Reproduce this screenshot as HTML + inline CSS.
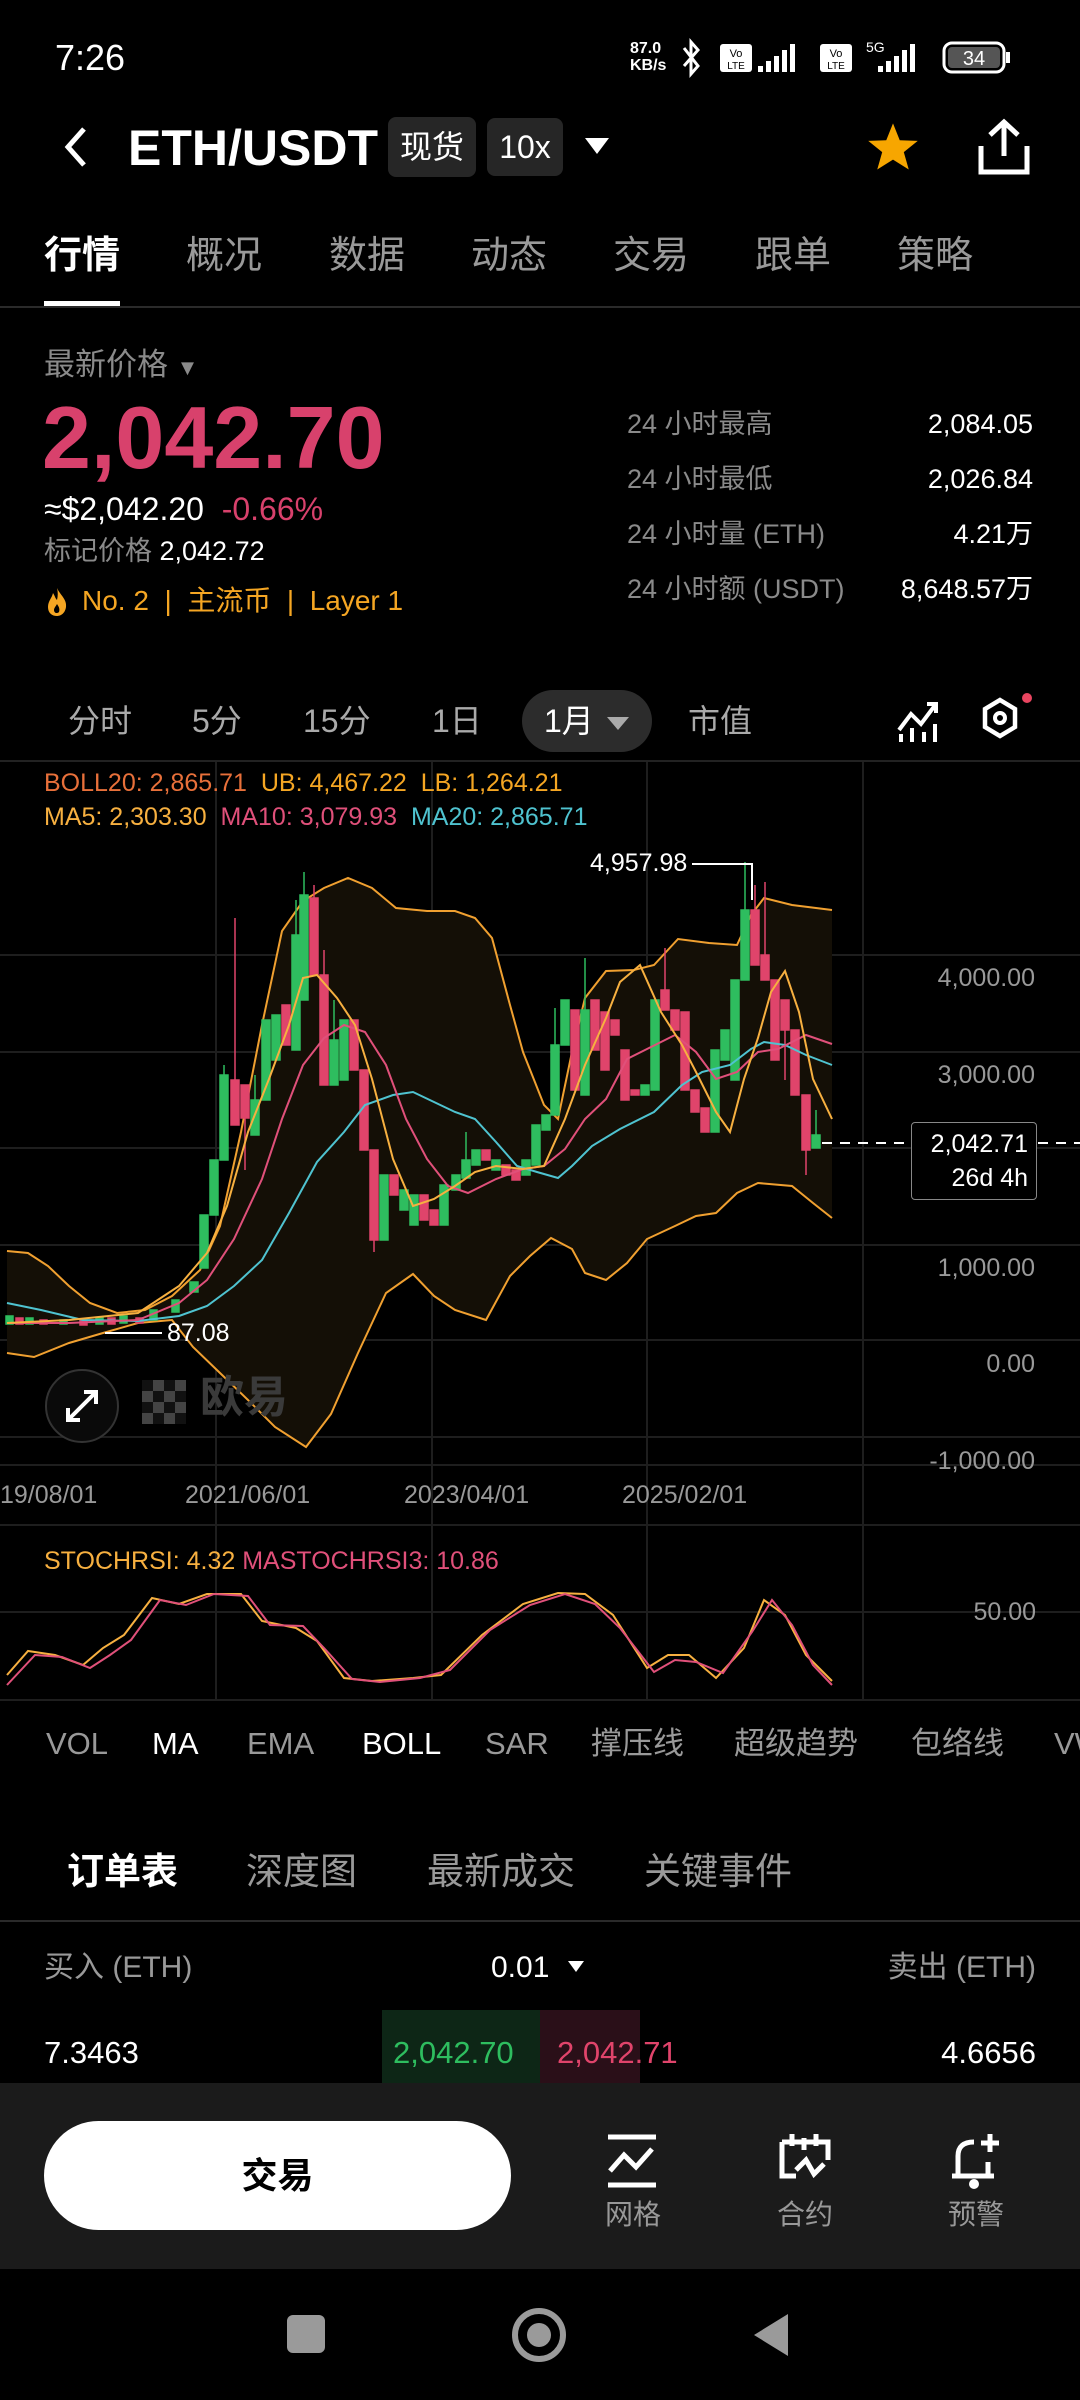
<!DOCTYPE html>
<html><head><meta charset="utf-8"><style>
*{margin:0;padding:0;box-sizing:border-box}
body{width:1080px;height:2400px;background:#000;color:#fff;font-family:"Liberation Sans","Noto Sans CJK SC",sans-serif;position:relative;overflow:hidden;line-height:1.2}
.a{position:absolute;white-space:nowrap}
.g{color:#8a8a8a}
</style></head><body>
<div class="a" style="left:55px;top:36px;font-size:36px">7:26</div>
<div class="a" style="left:630px;top:40px;font-size:16px;line-height:17px;font-weight:bold">87.0<br>KB/s</div>
<svg class="a" style="left:680px;top:36px" width="340" height="44" viewBox="0 0 340 44">
<path d="M4 12 L18 30 L11 38 L11 6 L18 14 L4 30" stroke="#fff" stroke-width="3" fill="none"/>
<rect x="40" y="8" width="32" height="28" rx="3" fill="#fff"/><text x="56" y="21" font-size="11" text-anchor="middle" fill="#000" font-family="Liberation Sans">Vo</text><text x="56" y="33" font-size="10" text-anchor="middle" fill="#000" font-family="Liberation Sans">LTE</text>
<g fill="#fff"><rect x="78" y="30" width="5" height="6"/><rect x="86" y="25" width="5" height="11"/><rect x="94" y="20" width="5" height="16"/><rect x="102" y="14" width="5" height="22"/><rect x="110" y="8" width="5" height="28"/></g>
<rect x="140" y="8" width="32" height="28" rx="3" fill="#fff"/><text x="156" y="21" font-size="11" text-anchor="middle" fill="#000" font-family="Liberation Sans">Vo</text><text x="156" y="33" font-size="10" text-anchor="middle" fill="#000" font-family="Liberation Sans">LTE</text>
<text x="186" y="16" font-size="14" fill="#fff" font-family="Liberation Sans">5G</text>
<g fill="#fff"><rect x="198" y="30" width="5" height="6"/><rect x="206" y="25" width="5" height="11"/><rect x="214" y="20" width="5" height="16"/><rect x="222" y="14" width="5" height="22"/><rect x="230" y="8" width="5" height="28"/></g>
<rect x="264" y="7" width="60" height="29" rx="8" fill="none" stroke="#fff" stroke-width="3"/><rect x="268" y="11" width="52" height="21" rx="4" fill="#555"/><rect x="326" y="16" width="4" height="11" fill="#fff"/>
<text x="294" y="29" font-size="20" text-anchor="middle" fill="#fff" font-family="Liberation Sans">34</text>
</svg>
<svg class="a" style="left:58px;top:125px" width="34" height="44"><path d="M26 4 L10 22 L26 40" stroke="#fff" stroke-width="5" fill="none"/></svg>
<div class="a" style="left:128px;top:118px;font-size:50px;font-weight:bold">ETH/USDT</div>
<div class="a" style="left:388px;top:117px;width:88px;height:60px;background:#262626;border-radius:8px;font-size:32px;text-align:center;line-height:60px">现货</div>
<div class="a" style="left:487px;top:118px;width:76px;height:58px;background:#262626;border-radius:8px;font-size:32px;text-align:center;line-height:58px">10x</div>
<svg class="a" style="left:585px;top:138px" width="24" height="18"><path d="M0 0 H24 L12 16Z" fill="#fff"/></svg>
<svg class="a" style="left:866px;top:120px" width="54" height="54" viewBox="0 0 24 24"><path d="M12 1.5 L15 9 L23 9.3 L16.8 14.3 L19 22 L12 17.6 L5 22 L7.2 14.3 L1 9.3 L9 9Z" fill="#f7a600"/></svg>
<svg class="a" style="left:976px;top:118px" width="56" height="58"><path d="M28 4 V38 M14 17 L28 4 L42 17 M5 28 V54 H51 V28" stroke="#fff" stroke-width="5" fill="none"/></svg>
<div class="a" style="left:44px;top:234px;font-size:38px;font-weight:bold">行情</div>
<div class="a" style="left:186px;top:234px;font-size:38px;color:#999">概况</div>
<div class="a" style="left:329px;top:234px;font-size:38px;color:#999">数据</div>
<div class="a" style="left:471px;top:234px;font-size:38px;color:#999">动态</div>
<div class="a" style="left:613px;top:234px;font-size:38px;color:#999">交易</div>
<div class="a" style="left:755px;top:234px;font-size:38px;color:#999">跟单</div>
<div class="a" style="left:897px;top:234px;font-size:38px;color:#999">策略</div>
<div class="a" style="left:44px;top:301px;width:76px;height:6px;background:#fff"></div>
<div class="a" style="left:0;top:306px;width:1080px;height:2px;background:#2a2a2a"></div>
<div class="a g" style="left:44px;top:346px;font-size:31px">最新价格 <span style="font-size:22px">▼</span></div>
<div class="a" style="left:42px;top:385px;font-size:88px;font-weight:bold;color:#d8416c">2,042.70</div>
<div class="a" style="left:44px;top:490px;font-size:32px">≈$2,042.20 &nbsp;<span style="color:#d8416c">-0.66%</span></div>
<div class="a" style="left:44px;top:535px;font-size:27px"><span class="g">标记价格</span> 2,042.72</div>
<svg class="a" style="left:46px;top:587px" width="22" height="30" viewBox="0 0 22 30"><path d="M11 1 C14 8 21 12 20 20 C19 27 14 29 11 29 C6 29 2 26 2 20 C2 14 6 11 7 6 C9 9 9 11 11 13 C12 9 12 5 11 1Z" fill="#f5a623"/><path d="M11 17 C13 20 14 22 13 25 C11 27 8 26 8 23 C8 21 10 19 11 17Z" fill="#000"/></svg>
<div class="a" style="left:82px;top:584px;font-size:28px;color:#f5a623">No. 2 &nbsp;| &nbsp;主流币 &nbsp;| &nbsp;Layer 1</div>
<div class="a g" style="left:627px;top:397px;font-size:27px;line-height:55px">24 小时最高<br>24 小时最低<br>24 小时量 (ETH)<br>24 小时额 (USDT)</div>
<div class="a" style="right:47px;top:397px;font-size:27px;line-height:55px;text-align:right">2,084.05<br>2,026.84<br>4.21万<br>8,648.57万</div>
<div class="a" style="left:522px;top:690px;width:130px;height:62px;background:#2c2c2c;border-radius:31px"></div>
<div class="a" style="left:68px;top:702px;font-size:32px;color:#aaa">分时</div>
<div class="a" style="left:192px;top:702px;font-size:32px;color:#aaa">5分</div>
<div class="a" style="left:303px;top:702px;font-size:32px;color:#aaa">15分</div>
<div class="a" style="left:432px;top:702px;font-size:32px;color:#aaa">1日</div>
<div class="a" style="left:544px;top:702px;font-size:32px">1月</div>
<svg class="a" style="left:607px;top:717px" width="22" height="14"><path d="M0 0 H22 L11 13Z" fill="#aaa"/></svg>
<div class="a" style="left:688px;top:702px;font-size:32px;color:#aaa">市值</div>
<svg class="a" style="left:896px;top:700px" width="44" height="44"><path d="M3 30 L15 14 L25 24 L40 4 M31 4 H40 V13" stroke="#fff" stroke-width="4" fill="none"/><path d="M5 42 V34 M16 42 V28 M28 42 V32 M39 42 V24" stroke="#fff" stroke-width="4"/></svg>
<svg class="a" style="left:978px;top:692px" width="60" height="56"><path d="M22 8 L37 17 V35 L22 44 L7 35 V17Z" stroke="#fff" stroke-width="4.5" fill="none"/><circle cx="22" cy="26" r="5" stroke="#fff" stroke-width="4" fill="none"/><circle cx="49" cy="6" r="5" fill="#e94560"/></svg>
<div class="a" style="left:0;top:760px;width:1080px;height:2px;background:#222"></div>
<svg class="a" style="left:0;top:0" width="1080" height="1720">
<g stroke="#1e1e1e" stroke-width="2"><line x1="216" y1="762" x2="216" y2="1700"/><line x1="432" y1="762" x2="432" y2="1700"/><line x1="647" y1="762" x2="647" y2="1700"/><line x1="863" y1="762" x2="863" y2="1700"/>
<line x1="0" y1="955" x2="1080" y2="955"/><line x1="0" y1="1052" x2="1080" y2="1052"/><line x1="0" y1="1148" x2="1080" y2="1148"/><line x1="0" y1="1245" x2="1080" y2="1245"/><line x1="0" y1="1340" x2="1080" y2="1340"/><line x1="0" y1="1437" x2="1080" y2="1437"/><line x1="0" y1="1465" x2="1080" y2="1465"/><line x1="0" y1="1525" x2="1080" y2="1525"/><line x1="0" y1="1612" x2="1080" y2="1612"/><line x1="0" y1="1700" x2="1080" y2="1700"/></g>
<polygon fill="#140f06" points="7,1251 28,1253 48,1266 69,1286 90,1303 117,1313 145,1310 172,1296 200,1270 220,1226 241,1132 262,1025 282,931 303,901 324,888 348,878 372,888 396,908 427,911 455,911 475,918 492,938 510,1005 523,1052 544,1105 558,1119 572,1052 585,998 606,971 634,970 654,965 678,939 709,943 737,945 751,915 764,898 792,905 832,910 832,1218 813,1203 792,1186 758,1183 737,1193 716,1213 696,1216 675,1226 647,1239 627,1263 606,1280 585,1273 572,1249 551,1238 530,1256 510,1276 486,1320 455,1310 434,1296 413,1274 386,1293 358,1353 331,1414 306,1447 275,1427 248,1400 220,1373 193,1347 172,1320 138,1323 103,1333 69,1343 34,1357 7,1353"/>
<g fill="none" stroke-width="2">
<polyline stroke="#f0a030" points="7,1251 28,1253 48,1266 69,1286 90,1303 117,1313 145,1310 172,1296 200,1270 220,1226 241,1132 262,1025 282,931 303,901 324,888 348,878 372,888 396,908 427,911 455,911 475,918 492,938 510,1005 523,1052 544,1105 558,1119 572,1052 585,998 606,971 634,970 654,965 678,939 709,943 737,945 751,915 764,898 792,905 832,910"/>
<polyline stroke="#f0a030" points="7,1353 34,1357 69,1343 103,1333 138,1323 172,1320 193,1347 220,1373 248,1400 275,1427 306,1447 331,1414 358,1353 386,1293 413,1274 434,1296 455,1310 486,1320 510,1276 530,1256 551,1238 572,1249 585,1273 606,1280 627,1263 647,1239 675,1226 696,1216 716,1213 737,1193 758,1183 792,1186 813,1203 832,1218"/>
</g>
<g stroke-width="1.5">
<g fill="#2ebd5f" stroke="#2ebd5f">
<rect x="6" y="1316" width="7" height="8"/><rect x="26" y="1318" width="7" height="6"/><rect x="60" y="1320" width="7" height="4"/><rect x="96" y="1318" width="7" height="6"/><rect x="120" y="1316" width="7" height="7"/><rect x="150" y="1310" width="7" height="10"/><rect x="172" y="1300" width="7" height="12"/>
<rect x="190" y="1282" width="8" height="10"/><rect x="200" y="1215" width="8" height="53"/><rect x="210" y="1160" width="8" height="55"/><rect x="220" y="1075" width="8" height="85"/><rect x="251" y="1100" width="8" height="35"/><rect x="262" y="1020" width="8" height="80"/><rect x="272" y="1015" width="8" height="45"/><rect x="292" y="935" width="8" height="115"/><rect x="300" y="895" width="8" height="105"/><rect x="330" y="1040" width="8" height="45"/><rect x="340" y="1020" width="8" height="60"/><rect x="380" y="1175" width="8" height="65"/><rect x="400" y="1190" width="8" height="20"/><rect x="410" y="1195" width="8" height="30"/><rect x="440" y="1185" width="8" height="40"/><rect x="452" y="1175" width="8" height="15"/><rect x="462" y="1160" width="8" height="18"/><rect x="472" y="1150" width="8" height="15"/><rect x="492" y="1160" width="8" height="10"/><rect x="522" y="1160" width="8" height="15"/><rect x="532" y="1125" width="8" height="40"/><rect x="542" y="1115" width="8" height="15"/><rect x="551" y="1045" width="8" height="70"/><rect x="561" y="1000" width="8" height="45"/><rect x="581" y="1010" width="8" height="85"/><rect x="641" y="1085" width="8" height="10"/><rect x="651" y="1000" width="8" height="90"/><rect x="711" y="1050" width="8" height="82"/><rect x="721" y="1030" width="8" height="30"/><rect x="731" y="980" width="8" height="100"/><rect x="741" y="910" width="8" height="70"/><rect x="812" y="1135" width="8" height="13"/>
</g>
<g stroke="#2ebd5f"><line x1="224" y1="1065" x2="224" y2="1075"/><line x1="255" y1="1075" x2="255" y2="1100"/><line x1="296" y1="900" x2="296" y2="935"/><line x1="304" y1="872" x2="304" y2="895"/><line x1="334" y1="1000" x2="334" y2="1040"/><line x1="466" y1="1132" x2="466" y2="1160"/><line x1="555" y1="1008" x2="555" y2="1045"/><line x1="585" y1="958" x2="585" y2="1010"/><line x1="745" y1="862" x2="745" y2="910"/><line x1="816" y1="1110" x2="816" y2="1135"/></g>
<g fill="#e0446b" stroke="#e0446b">
<rect x="16" y="1318" width="7" height="6"/><rect x="40" y="1320" width="7" height="4"/><rect x="80" y="1320" width="7" height="5"/><rect x="108" y="1318" width="7" height="6"/><rect x="136" y="1318" width="7" height="5"/>
<rect x="231" y="1080" width="8" height="45"/><rect x="241" y="1085" width="8" height="33"/><rect x="282" y="1005" width="8" height="40"/><rect x="310" y="898" width="8" height="77"/><rect x="320" y="975" width="8" height="110"/><rect x="350" y="1020" width="8" height="50"/><rect x="360" y="1070" width="8" height="80"/><rect x="370" y="1150" width="8" height="90"/><rect x="390" y="1175" width="8" height="20"/><rect x="420" y="1195" width="8" height="25"/><rect x="430" y="1210" width="8" height="15"/><rect x="482" y="1150" width="8" height="10"/><rect x="502" y="1165" width="8" height="10"/><rect x="512" y="1170" width="8" height="10"/><rect x="571" y="1010" width="8" height="80"/><rect x="591" y="1000" width="8" height="50"/><rect x="601" y="1012" width="8" height="58"/><rect x="611" y="1020" width="8" height="15"/><rect x="621" y="1050" width="8" height="50"/><rect x="631" y="1090" width="8" height="5"/><rect x="661" y="990" width="8" height="20"/><rect x="671" y="1010" width="8" height="20"/><rect x="681" y="1012" width="8" height="78"/><rect x="691" y="1090" width="8" height="22"/><rect x="701" y="1108" width="8" height="24"/><rect x="751" y="910" width="8" height="55"/><rect x="761" y="955" width="8" height="25"/><rect x="771" y="980" width="8" height="80"/><rect x="781" y="1000" width="8" height="30"/><rect x="791" y="1030" width="8" height="65"/><rect x="802" y="1095" width="8" height="55"/>
</g>
<g stroke="#e0446b"><line x1="235" y1="918" x2="235" y2="1080"/><line x1="245" y1="1118" x2="245" y2="1170"/><line x1="314" y1="885" x2="314" y2="898"/><line x1="324" y1="950" x2="324" y2="975"/><line x1="374" y1="1240" x2="374" y2="1252"/><line x1="665" y1="948" x2="665" y2="990"/><line x1="755" y1="885" x2="755" y2="910"/><line x1="765" y1="882" x2="765" y2="955"/><line x1="806" y1="1150" x2="806" y2="1175"/><line x1="785" y1="1030" x2="785" y2="1080"/></g>
</g>
<g fill="none" stroke-width="2">
<polyline stroke="#4fc3d0" points="7,1303 41,1310 83,1320 138,1321 179,1316 207,1306 234,1286 262,1260 289,1213 317,1162 344,1132 365,1105 393,1095 413,1092 434,1102 455,1112 475,1119 496,1142 517,1166 537,1172 558,1178 572,1166 592,1146 620,1129 654,1112 682,1085 702,1072 730,1065 751,1049 764,1042 785,1045 806,1055 832,1065"/>
<polyline stroke="#e0507a" points="7,1323 69,1323 138,1320 179,1303 207,1280 234,1239 262,1179 282,1119 303,1065 324,1038 344,1025 365,1032 386,1065 406,1119 427,1159 448,1186 468,1193 496,1179 523,1169 544,1166 565,1149 585,1119 606,1099 627,1059 647,1049 675,1035 696,1052 716,1079 737,1072 758,1052 778,1049 806,1035 832,1044"/>
<polyline stroke="#f7b040" points="7,1323 69,1320 138,1313 179,1286 207,1253 227,1206 248,1132 269,1079 289,1025 303,978 317,975 337,998 355,1025 372,1079 393,1159 413,1206 434,1199 455,1186 475,1172 496,1166 523,1169 544,1166 565,1119 585,1065 606,1018 620,982 640,965 661,1012 682,1045 696,1072 716,1112 730,1132 744,1079 758,1038 771,992 785,971 799,1012 813,1079 832,1119"/>
</g>
<polyline fill="none" stroke="#fff" stroke-width="2" points="692,864 752,864 752,900"/>
<polyline fill="none" stroke="#fff" stroke-width="2" points="105,1333 162,1333"/>
<line x1="822" y1="1143" x2="1080" y2="1143" stroke="#fff" stroke-width="2" stroke-dasharray="10,8"/>
<g fill="none" stroke-width="2">
<polyline stroke="#f7b040" points="7,1675 28,1651 55,1655 83,1665 103,1648 124,1635 152,1598 179,1604 207,1594 241,1594 262,1621 296,1628 317,1641 344,1678 372,1681 413,1678 441,1675 482,1635 523,1604 558,1593 585,1594 613,1615 647,1668 668,1655 689,1655 716,1678 744,1648 764,1600 785,1615 806,1655 832,1681"/>
<polyline stroke="#e0507a" points="7,1685 35,1655 62,1657 90,1668 110,1655 131,1640 160,1600 186,1605 214,1594 248,1596 270,1625 303,1626 324,1648 352,1679 380,1682 420,1678 450,1670 490,1630 530,1605 565,1594 595,1604 620,1628 654,1672 675,1660 696,1662 723,1673 752,1632 772,1600 792,1625 813,1665 832,1685"/>
</g>
</svg>
<div class="a" style="left:44px;top:766px;font-size:25px;line-height:34px"><span style="color:#e8703a">BOLL20: 2,865.71</span> &nbsp;<span style="color:#f5a623">UB: 4,467.22</span> &nbsp;<span style="color:#f5a623">LB: 1,264.21</span><br><span style="color:#f7b040">MA5: 2,303.30</span> &nbsp;<span style="color:#e0507a">MA10: 3,079.93</span> &nbsp;<span style="color:#4fc3d0">MA20: 2,865.71</span></div>
<div class="a" style="left:590px;top:848px;font-size:25px">4,957.98</div>
<div class="a" style="left:167px;top:1318px;font-size:25px">87.08</div>
<div class="a" style="right:45px;top:930px;font-size:25px;color:#999;text-align:right;line-height:96.5px">4,000.00<br>3,000.00<br>2,000.00<br>1,000.00<br>0.00<br>-1,000.00</div>
<div class="a" style="left:911px;top:1122px;width:126px;height:78px;background:#000;border:1.5px solid #888;border-radius:4px;font-size:25px;text-align:right;padding:4px 8px;line-height:34px">2,042.71<br>26d 4h</div>
<svg class="a" style="left:44px;top:1368px" width="76" height="76"><circle cx="38" cy="38" r="36" fill="#0a0a0a" stroke="#333" stroke-width="2"/><path d="M24 52 L52 24 M40 24 H52 V36 M24 40 V52 H36" stroke="#fff" stroke-width="4" fill="none"/></svg>
<div class="a" style="left:142px;top:1380px;width:44px;height:44px;background:repeating-conic-gradient(#444 0 25%,#111 0 50%) 0 0/22px 22px"></div>
<div class="a" style="left:200px;top:1372px;font-size:44px;font-weight:bold;color:#3a3a3a">欧易</div>
<div class="a" style="left:0;top:1480px;font-size:25px;color:#999">19/08/01</div>
<div class="a" style="left:185px;top:1480px;font-size:25px;color:#999">2021/06/01</div>
<div class="a" style="left:404px;top:1480px;font-size:25px;color:#999">2023/04/01</div>
<div class="a" style="left:622px;top:1480px;font-size:25px;color:#999">2025/02/01</div>
<div class="a" style="left:44px;top:1546px;font-size:25px"><span style="color:#f7b040">STOCHRSI: 4.32</span> <span style="color:#e0507a">MASTOCHRSI3: 10.86</span></div>
<div class="a" style="right:44px;top:1597px;font-size:25px;color:#999">50.00</div>
<div class="a" style="left:46px;top:1725px;font-size:31px;color:#999">VOL</div>
<div class="a" style="left:152px;top:1725px;font-size:31px">MA</div>
<div class="a" style="left:247px;top:1725px;font-size:31px;color:#999">EMA</div>
<div class="a" style="left:362px;top:1725px;font-size:31px">BOLL</div>
<div class="a" style="left:485px;top:1725px;font-size:31px;color:#999">SAR</div>
<div class="a" style="left:591px;top:1725px;font-size:31px;color:#999">撑压线</div>
<div class="a" style="left:734px;top:1725px;font-size:31px;color:#999">超级趋势</div>
<div class="a" style="left:911px;top:1725px;font-size:31px;color:#999">包络线</div>
<div class="a" style="left:1054px;top:1725px;font-size:31px;color:#999">VW</div>
<div class="a" style="left:67px;top:1850px;font-size:37px;font-weight:bold">订单表</div>
<div class="a" style="left:246px;top:1850px;font-size:37px;color:#999">深度图</div>
<div class="a" style="left:427px;top:1850px;font-size:37px;color:#999">最新成交</div>
<div class="a" style="left:644px;top:1850px;font-size:37px;color:#999">关键事件</div>
<div class="a" style="left:0;top:1920px;width:1080px;height:2px;background:#2a2a2a"></div>
<div class="a" style="left:44px;top:1950px;font-size:30px;color:#999">买入 (ETH)</div>
<div class="a" style="left:491px;top:1950px;font-size:30px">0.01</div>
<svg class="a" style="left:568px;top:1961px" width="16" height="12"><path d="M0 0 H16 L8 11Z" fill="#fff"/></svg>
<div class="a" style="right:44px;top:1950px;font-size:30px;color:#999">卖出 (ETH)</div>
<div class="a" style="left:382px;top:2010px;width:158px;height:74px;background:#0d2616"></div>
<div class="a" style="left:540px;top:2010px;width:100px;height:74px;background:#2a0f18"></div>
<div class="a" style="left:44px;top:2034px;font-size:31px">7.3463</div>
<div class="a" style="left:393px;top:2034px;font-size:31px;color:#2ebd5f">2,042.70</div>
<div class="a" style="left:557px;top:2034px;font-size:31px;color:#e0446b">2,042.71</div>
<div class="a" style="right:44px;top:2034px;font-size:31px">4.6656</div>
<div class="a" style="left:0;top:2083px;width:1080px;height:186px;background:#1b1b1b"></div>
<div class="a" style="left:44px;top:2121px;width:467px;height:109px;background:#fff;border-radius:55px;color:#000;font-size:36px;font-weight:bold;text-align:center;line-height:109px">交易</div>
<svg class="a" style="left:604px;top:2133px" width="56" height="56"><path d="M4 4 H52 M4 52 H52" stroke="#fff" stroke-width="5"/><path d="M6 38 L20 22 L32 34 L48 16" stroke="#fff" stroke-width="5" fill="none"/></svg>
<svg class="a" style="left:776px;top:2130px" width="60" height="62"><path d="M6 12 V46 H20 M6 12 H52 V30 M16 4 V16 M40 4 V16 M28 8 V20 M20 40 L30 30 L38 44 L48 34" stroke="#fff" stroke-width="5" fill="none"/></svg>
<svg class="a" style="left:946px;top:2130px" width="60" height="64"><path d="M6 46 H48 M12 46 V26 Q12 12 28 12 M42 46 V32" stroke="#fff" stroke-width="5" fill="none"/><path d="M44 4 V22 M35 13 H53" stroke="#fff" stroke-width="5"/><circle cx="28" cy="54" r="5" fill="#fff"/></svg>
<div class="a" style="left:605px;top:2198px;font-size:28px;color:#999">网格</div>
<div class="a" style="left:777px;top:2198px;font-size:28px;color:#999">合约</div>
<div class="a" style="left:948px;top:2198px;font-size:28px;color:#999">预警</div>
<div class="a" style="left:287px;top:2315px;width:38px;height:38px;background:#9a9a9a;border-radius:6px"></div>
<div class="a" style="left:512px;top:2308px;width:54px;height:54px;border:6px solid #9a9a9a;border-radius:50%"></div>
<div class="a" style="left:527px;top:2323px;width:24px;height:24px;background:#9a9a9a;border-radius:50%"></div>
<svg class="a" style="left:752px;top:2312px" width="40" height="46"><path d="M36 2 V44 L2 23Z" fill="#9a9a9a"/></svg>
</body></html>
